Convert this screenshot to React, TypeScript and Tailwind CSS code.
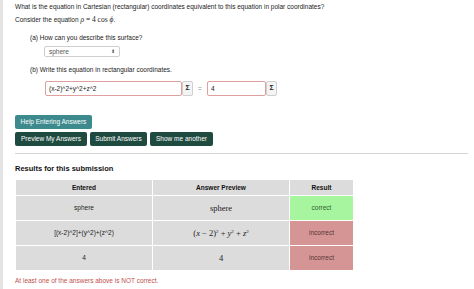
import React from "react";

export default function App() {
  const serif = { fontFamily: '"Liberation Serif", "DejaVu Serif", serif' };
  return (
    <div className="w-[474px] h-[289px] overflow-hidden bg-white flex" style={{ fontFamily: '"Liberation Sans", Arial, sans-serif' }}>
      <div className="w-[3px] bg-[#e4e4e4] shrink-0" />
      <div className="flex-1 pl-[12px] pr-[9px] text-[6.5px] text-[#222]">
        <div className="h-[13px] flex items-center">
          What is the equation in Cartesian (rectangular) coordinates equivalent to this equation in polar coordinates?
        </div>
        <div className="h-[14px] flex items-center">
          Consider the equation&nbsp;<span style={serif} className="italic text-[7.5px]">ρ</span>
          <span style={serif} className="text-[7.5px]">&nbsp;=&nbsp;4&nbsp;cos&nbsp;</span>
          <span style={serif} className="italic text-[7.5px]">ϕ</span>.
        </div>
        <div className="h-[17px] pt-[5px] flex items-center pl-[15px]">(a) How can you describe this surface?</div>
        <div className="mt-[2px] pl-[29px]">
          <div className="w-[76px] h-[11px] border border-[#cfcfcf] rounded-[2px] bg-white flex items-center justify-between px-[4px] text-[#555]">
            <span>sphere</span>
            <span className="text-[5px] leading-none">⬍</span>
          </div>
        </div>
        <div className="h-[13px] mt-[6px] flex items-center pl-[15px]">(b) Write this equation in rectangular coordinates.</div>
        <div className="mt-[5px] pl-[30px] flex items-center">
          <div className="w-[137px] h-[15px] border border-[#e0a0a0] rounded-[2px] flex items-center px-[3px] bg-white">(x-2)^2+y^2+z^2</div>
          <div className="w-[11px] h-[15px] border border-[#cfcfcf] rounded-[2px] bg-[#f4f4f4] flex items-center justify-center text-[7px] font-bold">Σ</div>
          <div className="w-[14px] text-center text-[#888]">=</div>
          <div className="w-[59px] h-[15px] border border-[#e0a0a0] rounded-[2px] flex items-center px-[3px] bg-white">4</div>
          <div className="w-[11px] h-[15px] border border-[#cfcfcf] rounded-[2px] bg-[#f4f4f4] flex items-center justify-center text-[7px] font-bold">Σ</div>
        </div>
        <div className="mt-[19px] flex">
          <div className="w-[77px] h-[14px] bg-[#3d8a8e] text-white rounded-[2px] flex items-center justify-center">Help Entering Answers</div>
        </div>
        <div className="mt-[3px] flex gap-[3px]">
          <div className="w-[72px] h-[14px] bg-[#1e4a40] text-white rounded-[2px] flex items-center justify-center">Preview My Answers</div>
          <div className="w-[57px] h-[14px] bg-[#1e4a40] text-white rounded-[2px] flex items-center justify-center">Submit Answers</div>
          <div className="w-[63px] h-[14px] bg-[#1e4a40] text-white rounded-[2px] flex items-center justify-center">Show me another</div>
        </div>
        <div className="mt-[7px] h-px bg-[#d4d4d4] w-[453px]" />
        <div className="mt-[9px] h-[12px] flex items-center font-bold text-[7.5px] text-[#111]">Results for this submission</div>
        <table className="mt-[4px] border-collapse text-[6.5px]" style={{ borderSpacing: 0 }}>
          <tbody>
            <tr className="h-[16px] bg-[#dcdcdc] font-bold text-[#111]">
              <td className="w-[137px] text-center border border-white">Entered</td>
              <td className="w-[137px] text-center border border-white">Answer Preview</td>
              <td className="w-[64px] text-center border border-white">Result</td>
            </tr>
            <tr className="h-[25px] bg-[#dcdcdc]">
              <td className="text-center border border-white">sphere</td>
              <td className="text-center border border-white text-[8.5px]" style={serif}>sphere</td>
              <td className="text-center border border-white bg-[#a8f5a0] text-[#2f5e2a]">correct</td>
            </tr>
            <tr className="h-[25px] bg-[#dcdcdc]">
              <td className="text-center border border-white">[(x-2)^2]+(y^2)+(z^2)</td>
              <td className="text-center border border-white text-[8.5px]" style={serif}>
                (<i>x</i> − 2)<sup className="text-[5px]">2</sup> + <i>y</i><sup className="text-[5px]">2</sup> + <i>z</i><sup className="text-[5px]">2</sup>
              </td>
              <td className="text-center border border-white bg-[#d69595] text-[#553333]">incorrect</td>
            </tr>
            <tr className="h-[25px] bg-[#dcdcdc]">
              <td className="text-center border border-white">4</td>
              <td className="text-center border border-white text-[8.5px]" style={serif}>4</td>
              <td className="text-center border border-white bg-[#d69595] text-[#553333]">incorrect</td>
            </tr>
          </tbody>
        </table>
        <div className="mt-[5px] h-[10px] flex items-center text-[#c0504d]">At least one of the answers above is NOT correct.</div>
      </div>
    </div>
  );
}
